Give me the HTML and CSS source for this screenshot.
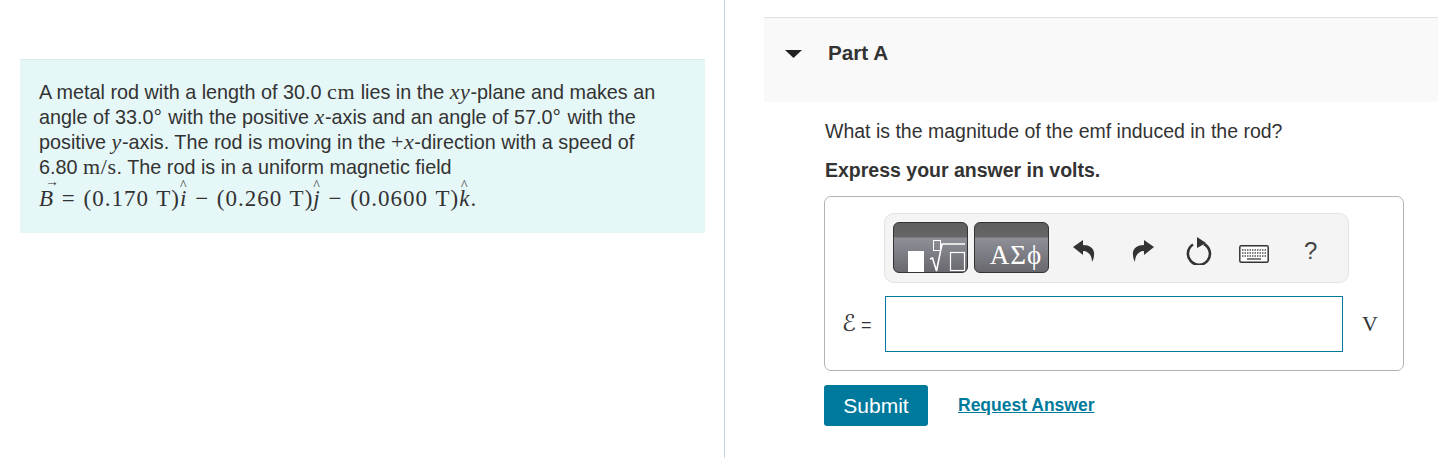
FILE: index.html
```html
<!DOCTYPE html>
<html lang="en">
<head>
    <meta charset="UTF-8">
    <title>Part A</title>
    <link rel="stylesheet" href="styles.css">
</head>
<body>
    <div class="left">
        <div class="intro">
            <p class="introtext">A metal rod with a length of 30.0 <span class="m">cm</span> lies in the <span class="m"><i>xy</i></span>-plane and makes an<br>
            angle of 33.0<span class="deg">°</span> with the positive <span class="m"><i>x</i></span>-axis and an angle of 57.0<span class="deg">°</span> with the<br>
            positive <span class="m"><i>y</i></span>-axis. The rod is moving in the <span class="m">+<i>x</i></span>-direction with a speed of<br>
            6.80 <span class="m">m/s</span>. The rod is in a uniform magnetic field</p>
            <p class="formula"><span class="hat vec"><i>B</i></span> = (0.170 T)<span class="hat"><i>i</i></span> − (0.260 T)<span class="hat"><i>j</i></span> − (0.0600 T)<span class="hat"><i>k</i></span>.</p>
        </div>
    </div>
    <div class="right">
        <div class="parthead">
            <svg class="arrow" width="17" height="8" viewBox="0 0 17 8"><path d="M0 0H17L8.500 8Z" fill="#222"/></svg>
            <span class="parttitle">Part A</span>
        </div>
        <div class="part">
            <p class="question">What is the magnitude of the emf induced in the rod?</p>
            <p class="express">Express your answer in volts.</p>
            <div class="answerbox">
                <div class="toolbar">
                    <div class="mathbtn">
                        <svg width="73" height="49" viewBox="0 0 73 49">
                            <rect x="14" y="28" width="16" height="21" fill="#fff"/>
                            <rect x="39.500" y="17.500" width="7" height="10" fill="none" stroke="#fff"/>
                            <path d="M36 36l2.500-1 4 13 5.500-27h23" fill="none" stroke="#fff" stroke-width="1.600"/>
                            <rect x="56.500" y="29.500" width="14" height="18" fill="none" stroke="#fff" stroke-width="1.200"/>
                        </svg>
                    </div>
                    <div class="mathbtn greek">ΑΣϕ</div>
                    <svg class="tool undo" width="22" height="22" viewBox="0 0 22 22"><path d="M0 7 10 0V5C17 5 22 9 21 15 21 18 20 20 19 22 19 16 16 11 10 11V15Z" fill="#333"/></svg>
                    <svg class="tool redo" width="22" height="22" viewBox="0 0 22 22"><path d="M22 7 12 0V5C5 5 0 9 1 15 1 18 2 20 3 22 3 16 6 11 12 11V15Z" fill="#333"/></svg>
                    <svg class="tool reset" width="26" height="28" viewBox="0 0 26 28"><path d="M7 7.500a11 11 0 1 0 11 -.5" fill="none" stroke="#333" stroke-width="2.600"/><path d="M11 0l9 6-9 5Z" fill="#333"/></svg>
                    <svg class="tool keys" width="30" height="18" viewBox="0 0 30 18">
                        <rect x=".8" y=".8" width="28.400" height="16.400" rx="1.500" fill="#fff" stroke="#333" stroke-width="1.500"/>
                        <path d="M3 5h24M3 8h24M3 11h24" stroke="#555" stroke-width="1.500" stroke-dasharray="1.500 1"/>
                        <path d="M8 14h14" stroke="#555" stroke-width="1.500"/>
                    </svg>
                    <span class="help">?</span>
                </div>
                <div class="inputrow">
                    <span class="label"><span class="script">ℰ</span> =</span>
                    <div class="input"></div>
                    <span class="unit">V</span>
                </div>
            </div>
            <div class="actions">
                <button class="submit">Submit</button>
                <a class="request" href="#">Request Answer</a>
            </div>
        </div>
    </div>
</body>
</html>
```
FILE: styles.css
```css
* {
    margin: 0;
    padding: 0;
    box-sizing: border-box;
}
html, body {
    width: 100%;
    height: 100%;
    overflow: hidden;
}
body {
    display: flex;
    background: #fff;
    color: #333;
    font-family: "Liberation Sans", Arial, sans-serif;
}
.left {
    width: 725px;
    flex-shrink: 0;
    padding: 59px 19px 0 20px;
    border-right: 1px solid #c5d5e2;
}
.intro {
    height: 174px;
    padding: 20px 19px 0;
    background: #e6f7f7;
    border-top: 1px solid #d9eaea;
}
.introtext {
    font-size: 19.800px;
    line-height: 25px;
}
.m {
    font-family: "Liberation Serif", serif;
    font-size: 22px;
    line-height: 0;
    letter-spacing: .6px;
}
.deg {
    font-size: 21px;
    line-height: 0;
    padding-right: 1px;
}
.formula {
    font-family: "Liberation Serif", serif;
    font-size: 23px;
    line-height: 36px;
    letter-spacing: 1px;
    word-spacing: 1px;
    margin-top: 1px;
}
.hat {
    position: relative;
    display: inline-block;
}
.hat::before {
    content: "^";
    position: absolute;
    left: 0;
    right: 0;
    top: -2px;
    text-align: center;
    font-size: 14px;
    line-height: 14px;
}
.vec::before {
    content: "→";
    top: -6px;
    left: 6px;
    font-size: 14px;
}
.right {
    flex: 1;
    padding: 17px 0 0 39px;
}
.parthead {
    display: flex;
    align-items: flex-start;
    height: 85px;
    padding: 24px 0 0 21px;
    background: #f9f9f9;
    border-top: 1px solid #e0e0e0;
}
.arrow {
    margin-top: 8px;
}
.parttitle {
    margin-left: 26px;
    font-size: 20.700px;
    font-weight: bold;
    line-height: 22px;
}
.part {
    padding: 17px 34px 0 60px;
}
.question {
    margin-left: 1px;
    font-size: 19.500px;
    line-height: 24px;
}
.express {
    margin: 15px 0 0 1px;
    font-size: 19.500px;
    font-weight: bold;
    line-height: 24px;
}
.answerbox {
    margin-top: 14px;
    height: 175px;
    padding: 16px 0 0 59px;
    border: 1px solid #b3b3b3;
    border-radius: 7px;
}
.toolbar {
    display: flex;
    align-items: center;
    width: 465px;
    height: 70px;
    padding-left: 8px;
    background: #f4f4f4;
    border: 1px solid #e2e2e2;
    border-radius: 10px;
}
.mathbtn {
    width: 75px;
    height: 51px;
    margin: -2px 6px 0 0;
    display: flex;
    align-items: flex-end;
    color: #fff;
    background: linear-gradient(#5f5f5f 0, #666 14px, #8f8f98 15px, #68686e 100%);
    border: 1px solid #333;
    border-radius: 6px;
    overflow: hidden;
}
.greek {
    justify-content: center;
    padding-left: 9px;
    font-family: "Liberation Serif", serif;
    font-size: 27px;
    line-height: 33px;
    letter-spacing: 1px;
}
.tool {
    flex-shrink: 0;
    margin-top: 6px;
}
.undo {
    margin-left: 18px;
}
.redo {
    margin-left: 37px;
}
.reset {
    margin-left: 32px;
}
.keys {
    margin: 12px 0 0 27px;
}
.help {
    margin: 6px 0 0 35px;
    font-size: 24px;
    color: #444;
}
.inputrow {
    display: flex;
    align-items: center;
    margin: 13px 0 0 -59px;
}
.label {
    width: 60px;
    padding: 0 0 2px 17px;
    font-size: 18px;
    white-space: nowrap;
}
.script {
    font-family: "DejaVu Sans", sans-serif;
    font-size: 23px;
}
.input {
    width: 458px;
    height: 56px;
    background: #fff;
    border: 1px solid #007a9c;
}
.unit {
    margin-left: 19px;
    font-family: "Liberation Serif", serif;
    font-size: 22px;
}
.actions {
    display: flex;
    align-items: center;
    margin-top: 14px;
}
.submit {
    width: 104px;
    height: 41px;
    color: #fff;
    background: #007a9c;
    border: none;
    border-radius: 3px;
    font-family: "Liberation Sans", Arial, sans-serif;
    font-size: 21px;
}
.request {
    margin-left: 30px;
    color: #007a9c;
    font-size: 17.500px;
    font-weight: bold;
}
```
